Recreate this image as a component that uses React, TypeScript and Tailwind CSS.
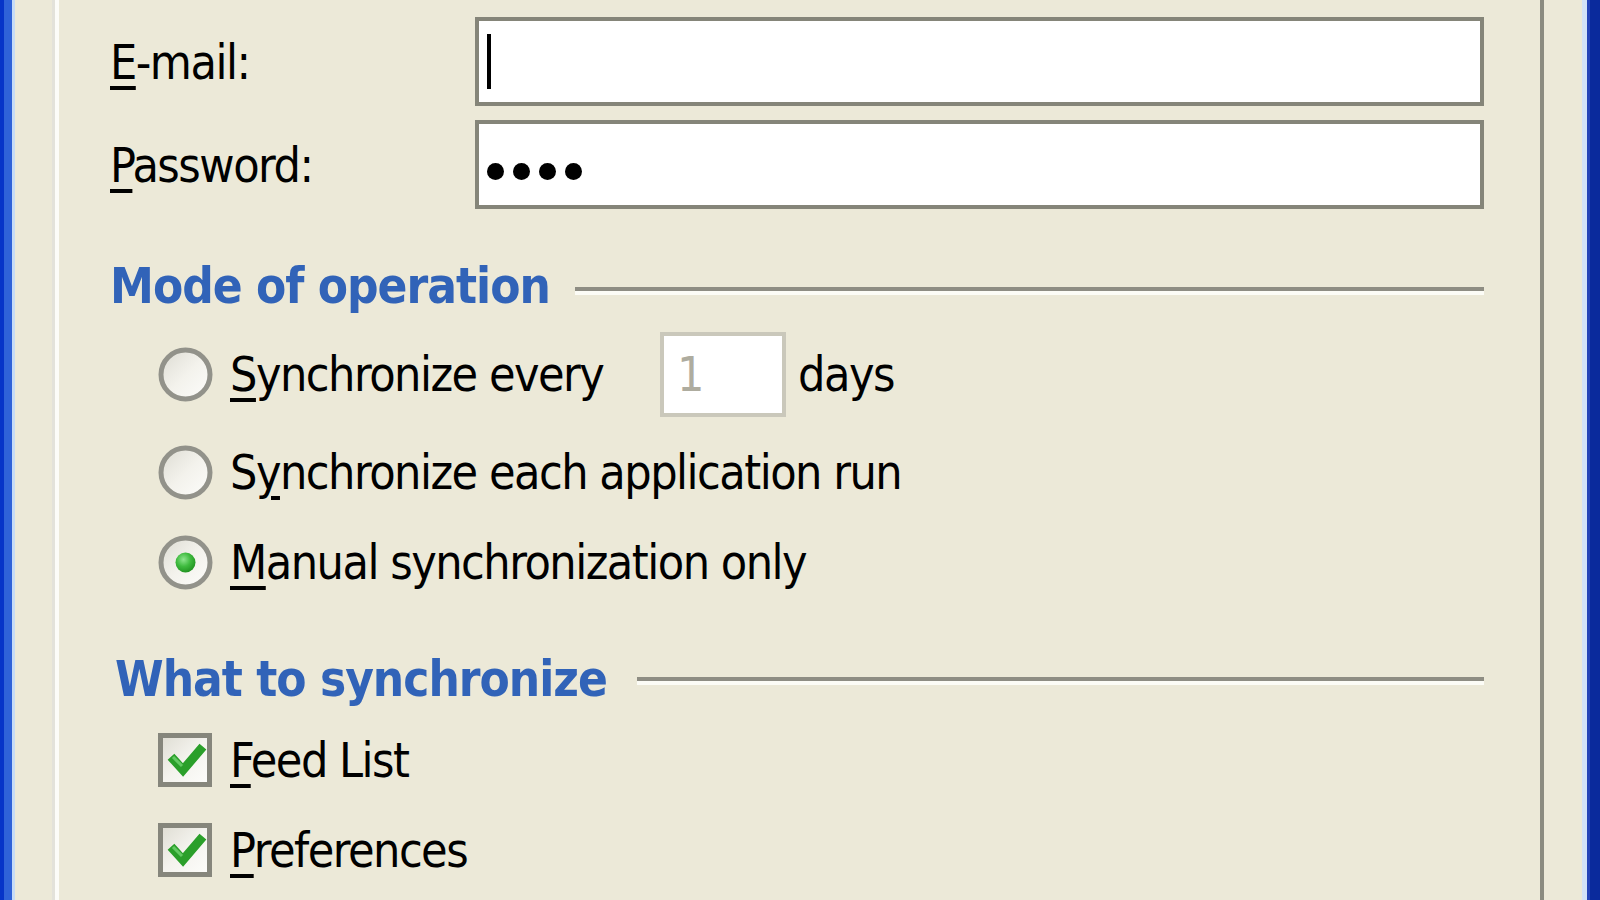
import React from "react";

const font = "font-['DejaVu_Sans_Condensed','DejaVu_Sans',sans-serif]";

function Radio({ checked }: { checked?: boolean }) {
  return (
    <svg width="55" height="55" viewBox="0 0 55 55" className="shrink-0">
      <defs>
        <linearGradient id="rfill" x1="0" y1="0" x2="1" y2="1">
          <stop offset="0" stopColor="#dcdbd2" />
          <stop offset="0.5" stopColor="#f3f2ec" />
          <stop offset="1" stopColor="#fdfdfb" />
        </linearGradient>
        <radialGradient id="rdot" cx="0.4" cy="0.35" r="0.7">
          <stop offset="0" stopColor="#8ee58e" />
          <stop offset="0.5" stopColor="#3fbb3f" />
          <stop offset="1" stopColor="#1e8f1e" />
        </radialGradient>
      </defs>
      <circle cx="27.5" cy="27.5" r="24.5" fill="url(#rfill)" stroke="#92928a" strokeWidth="5" />
      {checked && <circle cx="27.5" cy="27.5" r="10" fill="url(#rdot)" />}
    </svg>
  );
}

function Check() {
  return (
    <svg width="54" height="54" viewBox="0 0 54 54" className="shrink-0">
      <defs>
        <linearGradient id="cfill" x1="0" y1="0" x2="1" y2="1">
          <stop offset="0" stopColor="#dedcd2" />
          <stop offset="0.5" stopColor="#f4f3ee" />
          <stop offset="1" stopColor="#fdfdfb" />
        </linearGradient>
      </defs>
      <rect x="2.5" y="2.5" width="49" height="49" fill="url(#cfill)" stroke="#86867c" strokeWidth="5" />
      <polyline
        points="16,27 25,37 42,17"
        fill="none"
        stroke="#2a9f2a"
        strokeWidth="9"
        strokeLinecap="square"
        strokeLinejoin="miter"
      />
      <polyline points="15,24 24,33" fill="none" stroke="#63c963" strokeWidth="3" />
    </svg>
  );
}

function Key({ children }: { children: React.ReactNode }) {
  return <span className="underline decoration-[4px] underline-offset-[7px]">{children}</span>;
}

function SectionHeading({ title, lineTop, gap, indent }: { title: string; lineTop: string; gap: string; indent?: string }) {
  return (
    <div className={`flex h-[60px] ${indent ?? ""}`}>
      <div className="self-center text-[49px] leading-none font-bold tracking-[-1px] text-[#3163b8] whitespace-nowrap">
        {title}
      </div>
      <div className={`flex-1 ${gap} ${lineTop}`}>
        <div className="h-[4px] bg-[#8e8d83]" />
        <div className="h-[4px] bg-[#fcfcf6]" />
      </div>
    </div>
  );
}

export default function App() {
  return (
    <div className={`w-[1600px] h-[900px] flex overflow-hidden bg-[#ece9d8] text-black ${font}`}>
      {/* left window frame */}
      <div className="w-[4px] bg-[#0634c8]" />
      <div className="w-[8px] bg-[#2f62d8]" />
      <div className="w-[3px] bg-[#c6dbf7]" />
      <div className="w-[37px] bg-[#ece9d8]" />
      <div className="w-[3px] bg-[#e3e2da]" />
      <div className="w-[4px] bg-[#fcfcf8]" />

      {/* tab page */}
      <div className="flex-1 pl-[51px] pr-[56px] pt-[17px] text-[48px] leading-none tracking-[-1.5px]">
        <div className="flex h-[89px] items-center">
          <div className="w-[365px]">
            <Key>E</Key>-mail:
          </div>
          <div className="flex-1 h-full border-4 border-[#858579] bg-white pl-[8px] flex items-center">
            <div className="w-[4px] h-[55px] bg-black" />
          </div>
        </div>

        <div className="flex h-[89px] items-center mt-[14px]">
          <div className="w-[365px]">
            <Key>P</Key>assword:
          </div>
          <div className="flex-1 h-full border-4 border-[#858579] bg-white pl-[8px] flex items-center">
            <div className="flex gap-[9px] mt-[13px]">
              <span className="w-[17px] h-[17px] rounded-full bg-black" />
              <span className="w-[17px] h-[17px] rounded-full bg-black" />
              <span className="w-[17px] h-[17px] rounded-full bg-black" />
              <span className="w-[17px] h-[17px] rounded-full bg-black" />
            </div>
          </div>
        </div>

        <div className="mt-[47px]">
          <SectionHeading title="Mode of operation" lineTop="mt-[31px]" gap="ml-[25px]" />
        </div>

        <div className="pl-[48px]">
          <div className="flex h-[116px] items-center">
            <Radio />
            <div className="w-[447px] pl-[17px] whitespace-nowrap">
              <Key>S</Key>ynchronize every
            </div>
            <div className="w-[126px] h-[85px] border-4 border-[#cac8bb] bg-white pl-[13px] flex items-center text-[#aeac9f]">
              1
            </div>
            <div className="ml-[12px]">days</div>
          </div>
          <div className="flex h-[80px] items-center">
            <Radio />
            <div className="pl-[17px] whitespace-nowrap">
              S<Key>y</Key>nchronize each application run
            </div>
          </div>
          <div className="flex h-[100px] items-center">
            <Radio checked />
            <div className="pl-[17px] whitespace-nowrap">
              <Key>M</Key>anual synchronization only
            </div>
          </div>
        </div>

        <div className="mt-[37px]">
          <SectionHeading title="What to synchronize" lineTop="mt-[28px]" gap="ml-[30px]" indent="pl-[5px]" />
        </div>

        <div className="pl-[48px]">
          <div className="flex h-[102px] items-center">
            <Check />
            <div className="pl-[18px] whitespace-nowrap">
              <Key>F</Key>eed List
            </div>
          </div>
          <div className="flex h-[78px] items-center">
            <Check />
            <div className="pl-[18px] whitespace-nowrap">
              <Key>P</Key>references
            </div>
          </div>
        </div>
      </div>

      {/* right window frame */}
      <div className="w-[4px] bg-[#8b8b80]" />
      <div className="w-[38px] bg-[#ece9d8]" />
      <div className="w-[5px] bg-[#d2e2f8]" />
      <div className="w-[3px] bg-[#2443b8]" />
      <div className="w-[10px] bg-[#0a2a9c]" />
    </div>
  );
}
